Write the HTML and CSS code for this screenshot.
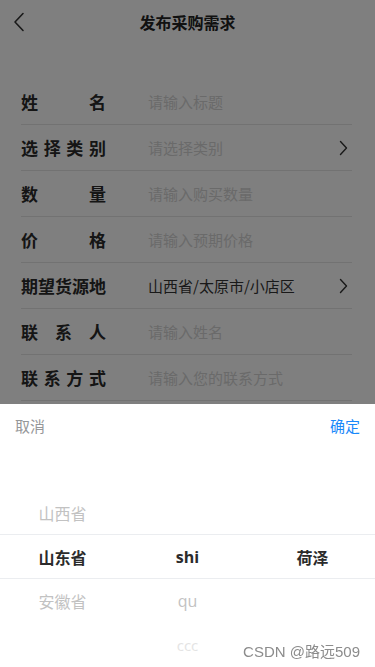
FILE: index.html
```html
<!DOCTYPE html>
<html lang="zh-CN">
<head>
    <meta charset="UTF-8">
    <meta name="viewport" content="width=device-width, initial-scale=1.0">
    <title>发布采购需求</title>
    <link rel="stylesheet" href="styles.css">
</head>
<body>
    <header class="nav-bar">
        <span class="nav-back">
            <svg width="12" height="20" viewBox="0 0 12 20"><path d="M10 1.5 L2 10 L10 18.5" fill="none" stroke="#333" stroke-width="1.6" stroke-linecap="round" stroke-linejoin="round"/></svg>
        </span>
        <h1 class="nav-title">发布采购需求</h1>
        <span></span>
    </header>

    <main class="form">
        <div class="row">
            <label class="label"><span>姓</span><span>名</span></label>
            <span class="value placeholder">请输入标题</span>
        </div>
        <div class="row">
            <label class="label"><span>选</span><span>择</span><span>类</span><span>别</span></label>
            <span class="value placeholder">请选择类别</span>
            <svg class="arrow" width="9" height="16" viewBox="0 0 9 16"><path d="M1.5 1.5 L7.5 8 L1.5 14.5" fill="none" stroke="#333" stroke-width="1.4" stroke-linecap="round" stroke-linejoin="round"/></svg>
        </div>
        <div class="row">
            <label class="label"><span>数</span><span>量</span></label>
            <span class="value placeholder">请输入购买数量</span>
        </div>
        <div class="row">
            <label class="label"><span>价</span><span>格</span></label>
            <span class="value placeholder">请输入预期价格</span>
        </div>
        <div class="row">
            <label class="label"><span>期</span><span>望</span><span>货</span><span>源</span><span>地</span></label>
            <span class="value">山西省/太原市/小店区</span>
            <svg class="arrow" width="9" height="16" viewBox="0 0 9 16"><path d="M1.5 1.5 L7.5 8 L1.5 14.5" fill="none" stroke="#333" stroke-width="1.4" stroke-linecap="round" stroke-linejoin="round"/></svg>
        </div>
        <div class="row">
            <label class="label"><span>联</span><span>系</span><span>人</span></label>
            <span class="value placeholder">请输入姓名</span>
        </div>
        <div class="row">
            <label class="label"><span>联</span><span>系</span><span>方</span><span>式</span></label>
            <span class="value placeholder">请输入您的联系方式</span>
        </div>
    </main>

    <div class="overlay"></div>

    <div class="popup">
        <div class="toolbar">
            <span class="btn-cancel">取消</span>
            <span class="btn-confirm">确定</span>
        </div>
        <div class="columns">
            <div class="column">
                <div class="item"></div>
                <div class="item far">山西省</div>
                <div class="item selected">山东省</div>
                <div class="item far">安徽省</div>
                <div class="item"></div>
            </div>
            <div class="column">
                <div class="item"></div>
                <div class="item"></div>
                <div class="item selected latin">shi</div>
                <div class="item far latin">qu</div>
                <div class="item farther latin">ccc</div>
            </div>
            <div class="column">
                <div class="item"></div>
                <div class="item"></div>
                <div class="item selected">荷泽</div>
                <div class="item"></div>
                <div class="item"></div>
            </div>
            <div class="frame"></div>
        </div>
    </div>

    <div class="watermark">CSDN @路远509</div>
</body>
</html>
```

FILE: styles.css
```css
/* Page */
body {
    margin: 0;
    font-family: "Noto Sans CJK SC", "Noto Sans", sans-serif;
    background-color: #fff;
    color: #333;
    height: 667px;
    overflow: hidden;
}

/* Navigation bar */
.nav-bar {
    height: 44px;
    display: grid;
    grid-template-columns: 44px 1fr 44px;
    align-items: center;
}

.nav-back {
    display: flex;
    justify-content: center;
    padding-right: 6px;
}

.nav-title {
    margin: 0;
    text-align: center;
    font-size: 16px;
    font-weight: 700;
    color: #222;
}

/* Form rows */
.form {
    margin-top: 35px;
    padding: 0 23px 0 21px;
}

.row {
    height: 46px;
    box-sizing: border-box;
    border-bottom: 1px solid #e4e4e4;
    display: flex;
    align-items: center;
}

.label {
    width: 85px;
    margin-right: 42px;
    display: flex;
    justify-content: space-between;
    font-size: 17px;
    font-weight: 700;
    color: #2a2a2a;
    letter-spacing: 0;
}

.value {
    flex: 1;
    font-size: 15px;
    color: #333;
}

.value.placeholder {
    color: #d4d4d4;
}

.arrow {
    margin-right: 4px;
}

/* Dim layer */
.overlay {
    position: fixed;
    inset: 0;
    background-color: rgba(0, 0, 0, 0.5);
}

/* Picker popup */
.popup {
    position: fixed;
    left: 0;
    right: 0;
    bottom: 0;
    height: 263px;
    background-color: #fff;
}

.toolbar {
    height: 44px;
    display: flex;
    justify-content: space-between;
    align-items: center;
    padding: 0 15px;
    font-size: 15px;
    margin-top: -1px;
}

.btn-cancel {
    color: #969799;
}

.btn-confirm {
    color: #1989fa;
}

.columns {
    position: relative;
    display: flex;
    height: 220px;
}

.column {
    flex: 1;
    display: flex;
    flex-direction: column;
}

.item {
    height: 44px;
    display: flex;
    justify-content: center;
    align-items: center;
    font-size: 16px;
    color: #333;
}

.item.latin {
    font-family: "Open Sans", "Noto Sans", sans-serif;
}

.item.selected {
    font-weight: 700;
    color: #2b2b2b;
}

.item.far {
    color: #c2c2c2;
}

.item.farther {
    color: #e4e4e4;
    font-size: 15px;
}

.frame {
    position: absolute;
    left: 0;
    right: 0;
    top: 87px;
    height: 43px;
    border-top: 1px solid #ebedf0;
    border-bottom: 1px solid #ebedf0;
    pointer-events: none;
}

.watermark {
    position: fixed;
    right: 15px;
    bottom: 6px;
    font-family: "Liberation Sans", "Noto Sans CJK SC", sans-serif;
    font-size: 15px;
    color: #8c8c8c;
}
```
